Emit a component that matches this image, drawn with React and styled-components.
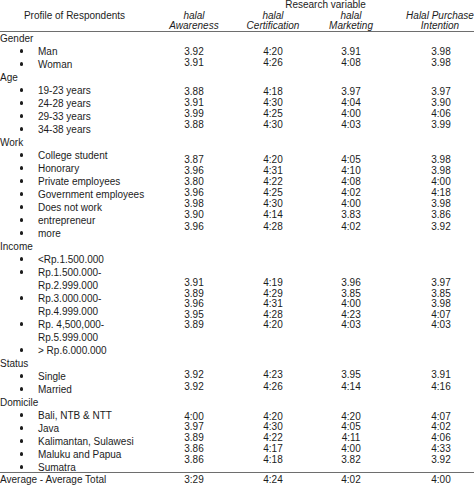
import React from "react";
import styled, { createGlobalStyle } from "styled-components";

const GlobalStyle = createGlobalStyle`
  html, body {
    margin: 0;
    padding: 0;
    background: #fff;
    overflow: hidden;
  }
  body {
    font-family: "Liberation Sans", Arial, sans-serif;
    font-size: 10px;
    color: #1c1c1c;
  }
`;

const COLS = "155px 78px 80px 76px 85px";

const Page = styled.div`
  width: 474px;
  height: 485px;
  overflow: hidden;
`;

const HeaderGrid = styled.div`
  display: grid;
  grid-template-columns: ${COLS};
  margin-top: -2.5px;
  border-bottom: 1px solid #6e6e6e;
`;

const ResearchTitle = styled.div`
  grid-column: 2 / 6;
  grid-row: 1;
  line-height: 13px;
  text-align: center;
  padding-left: 22px;
`;

const ProfileTitle = styled.div`
  grid-column: 1;
  grid-row: 2;
  line-height: 10px;
  text-align: center;
  padding-right: 6px;
`;

const ColTitle = styled.div`
  grid-row: 2;
  line-height: 10px;
  text-align: center;
  font-style: italic;
  padding-left: ${(p) => (p.$last ? "17px" : "0")};
  white-space: nowrap;
`;

const Section = styled.div`
  display: grid;
  grid-template-columns: 155px 1fr;
`;

const Labels = styled.div`
  display: flex;
  flex-direction: column;
  line-height: 13px;
`;

const Category = styled.div`
  white-space: nowrap;
`;

const Item = styled.div`
  display: flex;
`;

const Bullet = styled.span`
  width: 38px;
  height: 13px;
  flex: none;
  display: flex;
  align-items: center;
  padding-left: 19.5px;
  box-sizing: border-box;

  &::before {
    content: "";
    width: 3.2px;
    height: 3.2px;
    border-radius: 50%;
    background: #1c1c1c;
  }
`;

const ItemText = styled.span`
  white-space: nowrap;
`;

const Values = styled.div`
  display: grid;
  grid-template-columns: 78px 80px 76px 85px;
  grid-auto-rows: ${(p) => p.$pitch}px;
  align-content: start;
  padding-top: ${(p) => p.$offset}px;
  line-height: ${(p) => p.$pitch}px;
`;

const Cell = styled.div`
  text-align: center;
  padding-left: ${(p) => (p.$last ? "19px" : "0")};
`;

const TotalRow = styled.div`
  display: grid;
  grid-template-columns: ${COLS};
  margin-top: -2px;
  border-top: 1px solid #6e6e6e;
  line-height: 13px;
`;

const TotalLabel = styled.div`
  white-space: nowrap;
`;

const sections = [
  {
    title: "Gender",
    items: ["Man", "Woman"],
    offset: 14.5,
    pitch: 11,
    values: [
      ["3.92", "4:20", "3.91", "3.98"],
      ["3.91", "4:26", "4:08", "3.98"],
    ],
  },
  {
    title: "Age",
    items: ["19-23 years", "24-28 years", "29-33 years", "34-38 years"],
    offset: 15,
    pitch: 11,
    values: [
      ["3.88", "4:18", "3.97", "3.97"],
      ["3.91", "4:30", "4:04", "3.90"],
      ["3.99", "4:25", "4:00", "4:06"],
      ["3.88", "4:30", "4:03", "3.99"],
    ],
  },
  {
    title: "Work",
    items: [
      "College student",
      "Honorary",
      "Private employees",
      "Government employees",
      "Does not work",
      "entrepreneur",
      "more",
    ],
    offset: 18,
    pitch: 11.2,
    values: [
      ["3.87", "4:20", "4:05", "3.98"],
      ["3.96", "4:31", "4:10", "3.98"],
      ["3.80", "4:22", "4:08", "4:00"],
      ["3.96", "4:25", "4:02", "4:18"],
      ["3.98", "4:30", "4:00", "3.98"],
      ["3.90", "4:14", "3.83", "3.86"],
      ["3.96", "4:28", "4:02", "3.92"],
    ],
  },
  {
    title: "Income",
    items: [
      "<Rp.1.500.000",
      ["Rp.1.500.000-", "Rp.2.999.000"],
      ["Rp.3.000.000-", "Rp.4.999.000"],
      ["Rp. 4,500,000-", "Rp.5.999.000"],
      "> Rp.6.000.000",
    ],
    offset: 38.75,
    pitch: 10.5,
    values: [
      ["3.91", "4:19", "3.96", "3.97"],
      ["3.89", "4:29", "3.85", "3.85"],
      ["3.96", "4:31", "4:00", "3.98"],
      ["3.95", "4:28", "4:23", "4:07"],
      ["3.89", "4:20", "4:03", "4:03"],
    ],
  },
  {
    title: "Status",
    items: ["Single", "Married"],
    offset: 12.5,
    pitch: 12,
    values: [
      ["3.92", "4:23", "3.95", "3.91"],
      ["3.92", "4:26", "4:14", "4:16"],
    ],
  },
  {
    title: "Domicile",
    items: [
      "Bali, NTB & NTT",
      "Java",
      "Kalimantan, Sulawesi",
      "Maluku and Papua",
      "Sumatra",
    ],
    offset: 16,
    pitch: 10.8,
    values: [
      ["4:00", "4:20", "4:20", "4:07"],
      ["3.97", "4:30", "4:05", "4:02"],
      ["3.89", "4:22", "4:11", "4:06"],
      ["3.86", "4:17", "4:00", "4:33"],
      ["3.86", "4:18", "3.82", "3.92"],
    ],
  },
];

const totals = ["3:29", "4:24", "4:02", "4:00"];

function LabelItem({ text }) {
  const lines = Array.isArray(text) ? text : [text];
  return (
    <Item>
      <Bullet />
      <ItemText>
        {lines.map((line, i) => (
          <div key={i}>{line}</div>
        ))}
      </ItemText>
    </Item>
  );
}

function ProfileSection({ section }) {
  return (
    <Section>
      <Labels>
        <Category>{section.title}</Category>
        {section.items.map((item, i) => (
          <LabelItem key={i} text={item} />
        ))}
      </Labels>
      <Values $offset={section.offset} $pitch={section.pitch}>
        {section.values.flatMap((row, r) =>
          row.map((v, c) => (
            <Cell key={`${r}-${c}`} $last={c === 3}>
              {v}
            </Cell>
          ))
        )}
      </Values>
    </Section>
  );
}

export default function App() {
  return (
    <Page>
      <GlobalStyle />
      <HeaderGrid>
        <ResearchTitle>Research variable</ResearchTitle>
        <ProfileTitle>Profile of Respondents</ProfileTitle>
        <ColTitle>
          halal
          <br />
          Awareness
        </ColTitle>
        <ColTitle>
          halal
          <br />
          Certification
        </ColTitle>
        <ColTitle>
          halal
          <br />
          Marketing
        </ColTitle>
        <ColTitle $last>
          Halal Purchase
          <br />
          Intention
        </ColTitle>
      </HeaderGrid>

      {sections.map((s) => (
        <ProfileSection key={s.title} section={s} />
      ))}

      <TotalRow>
        <TotalLabel>Average - Average Total</TotalLabel>
        {totals.map((v, i) => (
          <Cell key={i} $last={i === 3}>
            {v}
          </Cell>
        ))}
      </TotalRow>
    </Page>
  );
}
